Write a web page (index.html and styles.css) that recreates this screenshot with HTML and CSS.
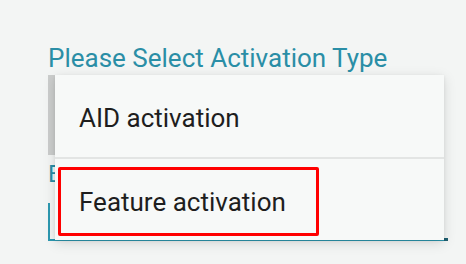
FILE: index.html
```html
<!DOCTYPE html>
<html>
<head>
<meta charset="utf-8">
<link rel="stylesheet" href="styles.css">
</head>
<body>
<div class="page">
  <div class="label">Please Select Activation Type</div>
  <div class="area">
    <div class="spinner-bar"></div>
    <div class="field">
      <div class="field-label">Enter Code</div>
      <div class="field-input"><span class="tick-right"></span></div>
    </div>
    <div class="popup">
      <div class="item">AID activation</div>
      <div class="sep"></div>
      <div class="item">Feature activation</div>
    </div>
    <div class="highlight"></div>
  </div>
</div>
</body>
</html>
```

FILE: styles.css
```css
html, body {
  margin: 0;
  padding: 0;
  background: #f3f5f4;
  width: 466px;
  height: 264px;
  overflow: hidden;
  font-family: Roboto, "Noto Sans", sans-serif;
}
.page {
  padding: 43px 0 0 48px;
}
.label {
  color: #2a8ea6;
  font-size: 26px;
  line-height: 30px;
}
.area {
  position: relative;
  width: 400px;
  height: 170px;
  margin-top: 2px;
}
.spinner-bar {
  width: 7px;
  height: 80px;
  margin-top: 1px;
  background: #cbcdcc;
}
.field {
  padding-top: 9px;
}
.field-label {
  color: #2a8ea6;
  font-size: 24px;
  line-height: 20px;
}
.field-input {
  position: relative;
  height: 36px;
  margin-top: 19px;
  border-left: 2px solid #2c98b0;
  border-bottom: 2px solid #2c98b0;
}
.tick-right {
  position: absolute;
  right: 0;
  bottom: -2px;
  width: 4px;
  height: 3px;
  background: #1f5f70;
}
.popup {
  position: absolute;
  left: 7px;
  top: 0;
  width: 389px;
  height: 165px;
  background: #f7f9f8;
  box-shadow: 0 3px 12px rgba(0,0,0,0.13), 0 1px 3px rgba(0,0,0,0.08);
  display: flex;
  flex-direction: column;
}
.item {
  flex: 1;
  display: flex;
  align-items: center;
  padding: 5px 0 0 24px;
  font-size: 26px;
  color: #1e1e1e;
}
.sep {
  height: 2px;
  background: #e3e5e4;
}
.highlight {
  position: absolute;
  left: 10px;
  top: 92px;
  width: 255px;
  height: 63px;
  border: 3px solid #ff0000;
  border-radius: 2px;
}
```
